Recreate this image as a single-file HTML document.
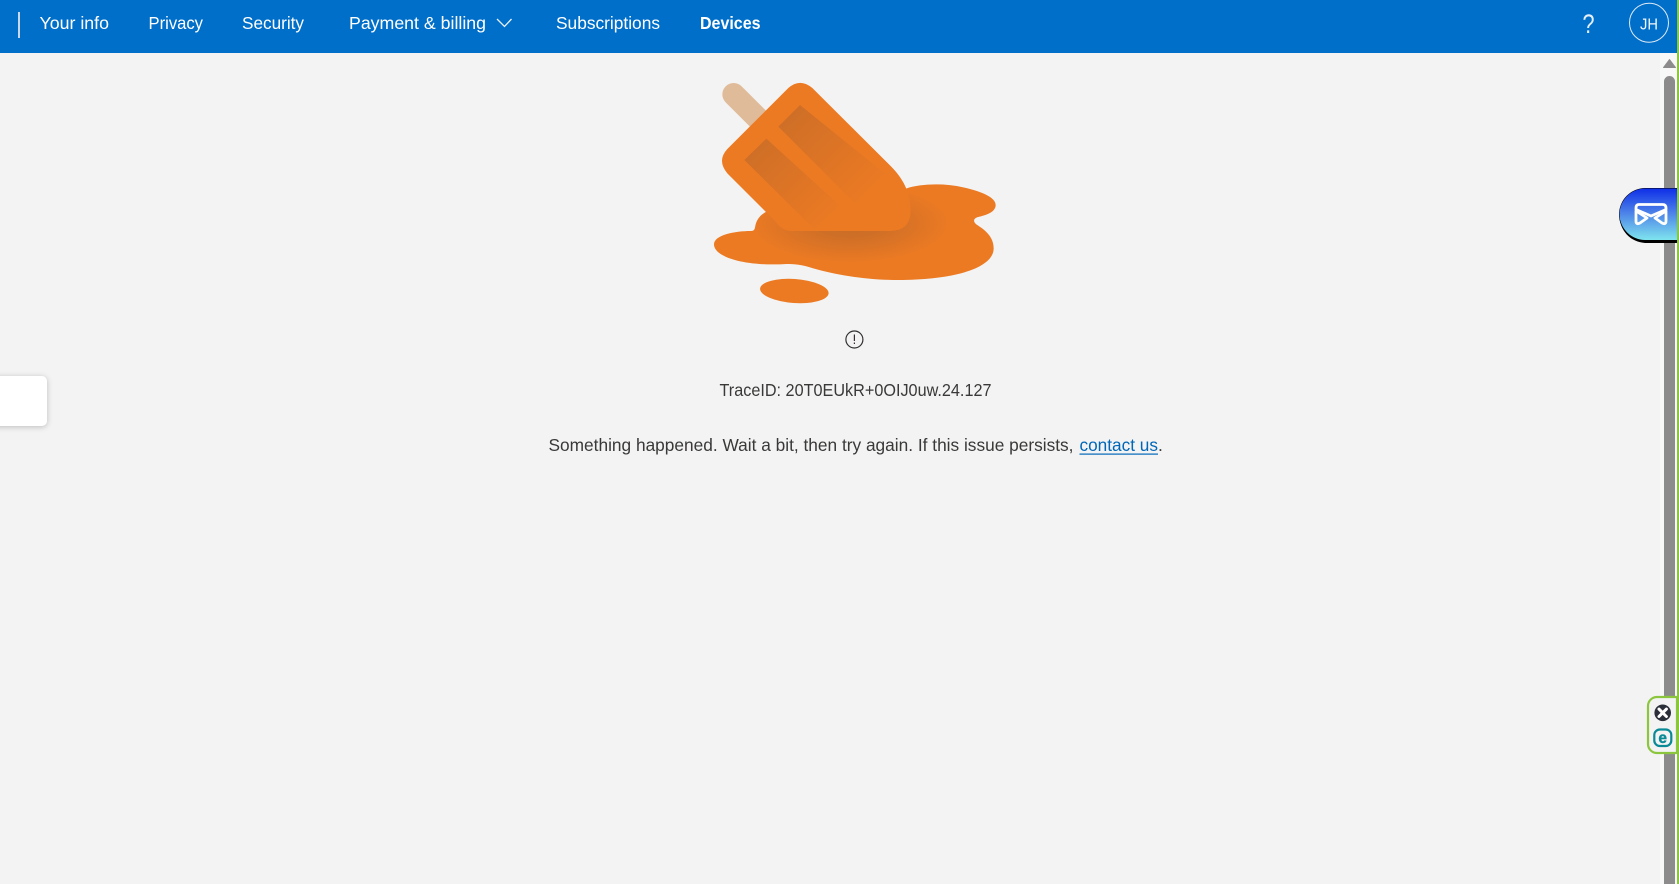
<!DOCTYPE html>
<html><head><meta charset="utf-8"><title>Devices</title>
<style>
html,body{margin:0;padding:0;width:1679px;height:884px;overflow:hidden;background:#f3f3f3}
svg{display:block;font-family:"Liberation Sans",sans-serif}
</style></head><body>
<svg width="1679" height="884" viewBox="0 0 1679 884" xmlns="http://www.w3.org/2000/svg">
<defs>
<linearGradient id="s1" gradientUnits="userSpaceOnUse" x1="330" y1="170" x2="570" y2="410"><stop offset="0" stop-color="#cf6f27"/><stop offset="1" stop-color="#ec7a23"/></linearGradient>
<linearGradient id="s2" gradientUnits="userSpaceOnUse" x1="225" y1="270" x2="445" y2="490"><stop offset="0" stop-color="#cf6f27"/><stop offset="1" stop-color="#ec7a23"/></linearGradient>
<radialGradient id="sh" gradientUnits="userSpaceOnUse" cx="0" cy="0" r="1" gradientTransform="translate(510 490) scale(300 120)"><stop offset="0" stop-color="#c96d27"/><stop offset=".35" stop-color="#cf6f27"/><stop offset="1" stop-color="#ec7a23"/></radialGradient>
<linearGradient id="mail" x1="0" y1="0" x2="0" y2="1"><stop offset="0" stop-color="#0f2fe8"/><stop offset=".45" stop-color="#4a7fe8"/><stop offset="1" stop-color="#80e6ee"/></linearGradient>
</defs>
<rect width="1679" height="884" fill="#f3f3f3"/>
<!-- nav -->
<rect width="1677" height="53" fill="#006fc9"/>
<rect x="18" y="12" width="2" height="26" fill="#c9d8e6"/>
<g fill="#fff" font-size="17.500">
<text x="39.500" y="29" textLength="69.500" lengthAdjust="spacingAndGlyphs">Your info</text>
<text x="148.500" y="29" textLength="54.500" lengthAdjust="spacingAndGlyphs">Privacy</text>
<text x="242" y="29" textLength="62" lengthAdjust="spacingAndGlyphs">Security</text>
<text x="349" y="29" textLength="137" lengthAdjust="spacingAndGlyphs">Payment &amp; billing</text>
<text x="556" y="29" textLength="104" lengthAdjust="spacingAndGlyphs">Subscriptions</text>
<text x="700" y="29" textLength="60.500" lengthAdjust="spacingAndGlyphs" font-weight="700">Devices</text>
</g>
<path d="M497 19l7.500 7.500L511.500 19" fill="none" stroke="#e8f1fa" stroke-width="1.300"/>
<text x="1588.500" y="33" font-size="27" fill="#e6f0fa" text-anchor="middle" textLength="12" lengthAdjust="spacingAndGlyphs">?</text>
<circle cx="1649" cy="22.700" r="19.500" fill="none" stroke="#dfeaf5" stroke-width="1"/>
<text x="1649" y="29.500" font-size="16" fill="#f0f6fc" text-anchor="middle" textLength="18" lengthAdjust="spacingAndGlyphs">JH</text>
<!-- illustration -->
<g transform="translate(680 60) scale(.33333)">
<path d="M102 553C102 525 165 513 212 513C222 513 224 510 226 497C232 470 250 458 275 447L680 385C720 372 790 368 850 382C905 394 947 412 947 435C947 458 915 466 895 471C880 475 878 484 890 494C915 510 941 530 941 565C941 625 820 660 655 660C560 660 470 645 400 625C375 617 350 611 320 612C190 620 102 590 102 553Z" fill="url(#sh)"/>
<ellipse cx="343" cy="693" rx="103" ry="36" transform="rotate(4 343 693)" fill="#ec7a23"/>
<path d="M161 103L262 204" stroke="#e0bb9a" stroke-width="68" stroke-linecap="round" fill="none"/>
<path d="M325 84Q360 53 397 84L630 316C670 355 692 400 692 450Q692 513 630 513L335 513Q305 513 285 483L142 340Q110 302 142 267Z" fill="#ec7a23"/>
<path d="M360 135L295 200L590 495L680 470L680 450Q675 395 620 345Z" fill="url(#s1)"/>
<path d="M259 236L193 300L405 510L560 510Z" fill="url(#s2)"/>
</g>
<!-- info icon -->
<circle cx="854.400" cy="339.500" r="8.500" fill="none" stroke="#323130" stroke-width="1.200"/>
<rect x="853.800" y="334.500" width="1.200" height="6.500" fill="#323130"/>
<rect x="853.800" y="342.500" width="1.200" height="1.500" fill="#323130"/>
<!-- text -->
<g fill="#3a3938" font-size="17.500">
<text x="719.500" y="396" textLength="272" lengthAdjust="spacingAndGlyphs">TraceID: 20T0EUkR+0OIJ0uw.24.127</text>
<text x="548.500" y="451" textLength="525" lengthAdjust="spacingAndGlyphs">Something happened. Wait a bit, then try again. If this issue persists,</text>
<text x="1079.500" y="451" textLength="78.500" lengthAdjust="spacingAndGlyphs" fill="#0067b8">contact us</text>
<text x="1158" y="451">.</text>
</g>
<rect x="1079.500" y="453.500" width="78.500" height="1.200" fill="#0067b8"/>
<!-- left panel -->
<rect x="-10" y="376" width="57" height="50" rx="5" fill="#fff" style="filter:drop-shadow(0 1px 3px rgba(0,0,0,.22))"/>
<!-- scrollbar -->
<rect x="1660" y="53" width="17" height="831" fill="#f8f8f8"/>
<path d="M1664 81.500a5.500 5.500 0 0 1 11 0V884h-11Z" fill="#8c8c8c"/>
<path d="M1669.500 59.500L1675.500 67.500H1663.500Z" fill="#8c8c8c" stroke="#8c8c8c" stroke-linejoin="round"/>
<!-- green edge -->
<rect x="1677" y="0" width="2" height="884" fill="#8cc63f"/>
<!-- mail widget -->
<path d="M1677 188H1645A26.500 26.500 0 0 0 1619 214.500A26.500 26.500 0 0 0 1645 241H1677V240H1646A25 25 0 0 1 1620 214.500A25 25 0 0 1 1646 189H1677Z" fill="#000"/>
<path d="M1677 188.500H1645A26 26 0 0 0 1619.500 215A26 26 0 0 0 1645 240.500H1677Z" fill="url(#mail)"/>
<path d="M1619.500 215A26 26 0 0 0 1645 240H1677V243H1645A27 27 0 0 1 1619.500 215Z" fill="#000"/>
<g fill="none" stroke="#fff" stroke-width="2.800" stroke-linejoin="round" stroke-linecap="round">
<path d="M1639 204.500H1662.500Q1666 204.500 1666 208L1666 209.500L1651 216L1636 209.500L1636 208Q1636 204.500 1639 204.500Z"/>
<path d="M1636 211V221Q1636 225 1640 223L1647 218L1636 211"/>
<path d="M1666 211V221Q1666 225 1662 223L1655 218L1666 211"/>
</g>
<!-- eset panel -->
<path d="M1677 697H1657A9 9 0 0 0 1648 706V744A9 9 0 0 0 1657 753H1677Z" fill="#f3f3f3" stroke="#8cc63f" stroke-width="2.200"/>
<circle cx="1662.700" cy="712.800" r="8.300" fill="#2b2f3a"/>
<path d="M1659 709.100L1666.400 716.500M1666.400 709.100L1659 716.500" stroke="#fff" stroke-width="3" stroke-linecap="round"/>
<rect x="1654.300" y="729.500" width="17" height="16.500" rx="5.500" fill="none" stroke="#0a8a96" stroke-width="2.200"/>
<text x="1662.700" y="743" font-size="15.500" font-weight="700" fill="#0a8a96" text-anchor="middle" stroke="#0a8a96" stroke-width=".4">e</text>
</svg>
</body></html>
